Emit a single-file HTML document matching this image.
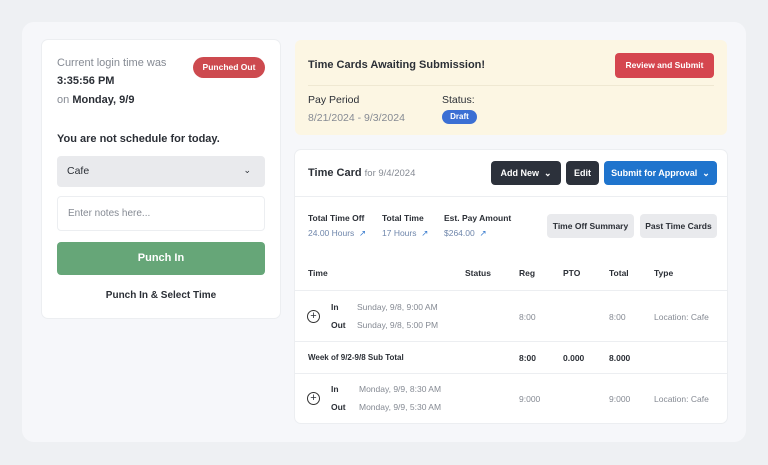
<!DOCTYPE html>
<html><head><style>
*{margin:0;padding:0;box-sizing:border-box}
body{width:768px;height:465px;background:#eef0f3;font-family:"Liberation Sans",sans-serif;position:relative;overflow:hidden;color:#2b2f36}
.a{position:absolute;white-space:nowrap}
.outer{position:absolute;left:22px;top:22px;width:724px;height:420px;background:#f6f7fa;border-radius:12px}
.card{position:absolute;background:#fff;border-radius:6px;box-shadow:0 0 0 1px #eceef1}
.b{font-weight:bold}
.g{color:#858a93}
.btn{position:absolute;border-radius:4px;font-size:9px;font-weight:bold;text-align:center;color:#fff;white-space:nowrap}
.hr{position:absolute;height:1px;background:#eceef1}
</style></head><body>
<div class="outer"></div>

<div class="card" style="left:42px;top:40px;width:238px;height:278px"></div>
<div class="a g" style="left:57px;top:57px;font-size:11px">Current login time was</div>
<div class="a b" style="left:57px;top:75px;font-size:11px">3:35:56 PM</div>
<div class="a" style="left:57px;top:94px;font-size:11px"><span class="g">on</span> <b>Monday, 9/9</b></div>
<div class="btn" style="left:193px;top:57px;width:72px;height:21px;line-height:21px;background:#cd4a4f;border-radius:11px;font-size:8.5px">Punched Out</div>
<div class="a b" style="left:57px;top:133px;font-size:11px">You are not schedule for today.</div>
<div class="a" style="left:57px;top:156px;width:208px;height:31px;background:#e9eaed;border-radius:4px;font-size:10.5px;line-height:31px;padding-left:10px">Cafe<span style="position:absolute;right:14px;top:-1px;font-size:9px">&#8964;</span></div>
<div class="a g" style="left:57px;top:196px;width:208px;height:35px;border:1px solid #eceef1;border-radius:4px;font-size:10px;line-height:33px;padding-left:10px">Enter notes here...</div>
<div class="btn" style="left:57px;top:242px;width:208px;height:33px;line-height:33px;background:#66a678;font-size:11px">Punch In</div>
<div class="a b" style="left:57px;top:290px;width:208px;text-align:center;font-size:10px">Punch In &amp; Select Time</div>

<div class="card" style="left:295px;top:40px;width:432px;height:95px;background:#fcf6e3;box-shadow:none"></div>
<div class="a b" style="left:308px;top:59px;font-size:11px">Time Cards Awaiting Submission!</div>
<div class="btn" style="left:615px;top:53px;width:99px;height:25px;line-height:25px;background:#d5464f;font-size:8.5px">Review and Submit</div>
<div class="hr" style="left:308px;top:85px;width:406px;background:#efe8d2"></div>
<div class="a" style="left:308px;top:94px;font-size:10.5px">Pay Period</div>
<div class="a g" style="left:308px;top:112px;font-size:10.5px">8/21/2024 - 9/3/2024</div>
<div class="a" style="left:442px;top:94px;font-size:10.5px">Status:</div>
<div class="btn" style="left:442px;top:110px;width:35px;height:14px;line-height:14px;background:#3b6fd4;border-radius:7px;font-size:8px">Draft</div>

<div class="card" style="left:295px;top:150px;width:432px;height:273px"></div>
<div class="a" style="left:308px;top:167px;font-size:11px"><b>Time Card</b> <span class="g" style="font-size:9.5px">for 9/4/2024</span></div>
<div class="btn" style="left:491px;top:161px;width:70px;height:24px;line-height:24px;background:#2c313b">Add New &nbsp;&#8964;</div>
<div class="btn" style="left:566px;top:161px;width:33px;height:24px;line-height:24px;background:#2c313b">Edit</div>
<div class="btn" style="left:604px;top:161px;width:113px;height:24px;line-height:24px;background:#1f74cd">Submit for Approval &nbsp;&#8964;</div>
<div class="hr" style="left:295px;top:196px;width:432px"></div>
<div class="a b" style="left:308px;top:213px;font-size:8.5px">Total Time Off</div>
<div class="a" style="left:308px;top:228px;font-size:8.5px;color:#6f86ab">24.00 Hours &nbsp;<span style="color:#3d7fd0">&#x2197;</span></div>
<div class="a b" style="left:382px;top:213px;font-size:8.5px">Total Time</div>
<div class="a" style="left:382px;top:228px;font-size:8.5px;color:#6f86ab">17 Hours &nbsp;<span style="color:#3d7fd0">&#x2197;</span></div>
<div class="a b" style="left:444px;top:213px;font-size:8.5px">Est. Pay Amount</div>
<div class="a" style="left:444px;top:228px;font-size:8.5px;color:#6f86ab">$264.00 &nbsp;<span style="color:#3d7fd0">&#x2197;</span></div>
<div class="btn" style="left:547px;top:214px;width:87px;height:24px;line-height:24px;background:#e9eaed;color:#2b2f36;font-size:8.5px">Time Off Summary</div>
<div class="btn" style="left:640px;top:214px;width:77px;height:24px;line-height:24px;background:#e9eaed;color:#2b2f36;font-size:8.5px">Past Time Cards</div>

<div class="a b" style="left:308px;top:268px;font-size:8.5px">Time</div>
<div class="a b" style="left:465px;top:268px;font-size:8.5px">Status</div>
<div class="a b" style="left:519px;top:268px;font-size:8.5px">Reg</div>
<div class="a b" style="left:563px;top:268px;font-size:8.5px">PTO</div>
<div class="a b" style="left:609px;top:268px;font-size:8.5px">Total</div>
<div class="a b" style="left:654px;top:268px;font-size:8.5px">Type</div>
<div class="hr" style="left:295px;top:290px;width:432px"></div>

<div class="a" style="left:307px;top:310px;width:13px;height:13px;border:1.2px solid #333;border-radius:50%;font-size:11px;line-height:10px;text-align:center">+</div>
<div class="a b" style="left:331px;top:302px;font-size:8.5px">In</div>
<div class="a g" style="left:357px;top:302px;font-size:8.5px">Sunday, 9/8, 9:00 AM</div>
<div class="a b" style="left:331px;top:320px;font-size:8.5px">Out</div>
<div class="a g" style="left:357px;top:320px;font-size:8.5px">Sunday, 9/8, 5:00 PM</div>
<div class="a g" style="left:519px;top:312px;font-size:8.5px">8:00</div>
<div class="a g" style="left:609px;top:312px;font-size:8.5px">8:00</div>
<div class="a g" style="left:654px;top:312px;font-size:8.5px">Location: Cafe</div>
<div class="hr" style="left:295px;top:341px;width:432px"></div>
<div class="a b" style="left:308px;top:353px;font-size:8px">Week of 9/2-9/8 Sub Total</div>
<div class="a b" style="left:519px;top:353px;font-size:8.5px">8:00</div>
<div class="a b" style="left:563px;top:353px;font-size:8.5px">0.000</div>
<div class="a b" style="left:609px;top:353px;font-size:8.5px">8.000</div>
<div class="hr" style="left:295px;top:373px;width:432px"></div>

<div class="a" style="left:307px;top:392px;width:13px;height:13px;border:1.2px solid #333;border-radius:50%;font-size:11px;line-height:10px;text-align:center">+</div>
<div class="a b" style="left:331px;top:384px;font-size:8.5px">In</div>
<div class="a g" style="left:359px;top:384px;font-size:8.5px">Monday, 9/9, 8:30 AM</div>
<div class="a b" style="left:331px;top:402px;font-size:8.5px">Out</div>
<div class="a g" style="left:359px;top:402px;font-size:8.5px">Monday, 9/9, 5:30 AM</div>
<div class="a g" style="left:519px;top:394px;font-size:8.5px">9:000</div>
<div class="a g" style="left:609px;top:394px;font-size:8.5px">9:000</div>
<div class="a g" style="left:654px;top:394px;font-size:8.5px">Location: Cafe</div>
</body></html>
